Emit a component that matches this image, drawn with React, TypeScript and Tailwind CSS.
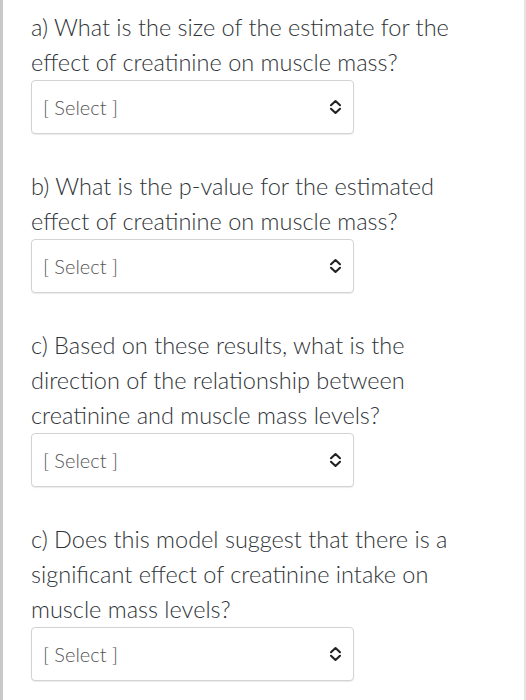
import React from "react";

interface QuestionProps {
  text: string;
}

const SelectBox = () => {
  return (
    <div className="flex h-[54px] w-[323px] items-center justify-between rounded-[4px] border border-[#d3d3d3] bg-white pl-[11px] pr-[11px] shadow-[0_1px_1px_rgba(0,0,0,0.08)]">
      <span className="text-[20px] font-light text-[#555]">[ Select ]</span>
      <svg width="13" height="16" viewBox="0 0 13 16" fill="none">
        <path
          d="M2 6.2 L6.5 2 L11 6.2"
          stroke="#222"
          strokeWidth="2.1"
          strokeLinecap="round"
          strokeLinejoin="round"
        />
        <path
          d="M2 9.8 L6.5 14 L11 9.8"
          stroke="#222"
          strokeWidth="2.1"
          strokeLinecap="round"
          strokeLinejoin="round"
        />
      </svg>
    </div>
  );
};

const Question: React.FC<QuestionProps> = ({ text }) => {
  return (
    <div className="mb-[35px] flex flex-col">
      <p className="w-[445px] text-[23.5px] font-light leading-[35px] text-[#2f3438]">
        {text}
      </p>
      <SelectBox />
    </div>
  );
};

const questions = [
  "a) What is the size of the estimate for the effect of creatinine on muscle mass?",
  "b) What is the p-value for the estimated effect of creatinine on muscle mass?",
  "c) Based on these results, what is the direction of the relationship between creatinine and muscle mass levels?",
  "c) Does this model suggest that there is a significant effect of creatinine intake on muscle mass levels?",
];

export default function App() {
  return (
    <div
      className="h-[700px] w-[526px] overflow-hidden border-l-[3px] border-r-2 border-l-[#c8c8c8] border-r-[#e4e4e4] bg-white pl-[28px] pt-[10px]"
      style={{ fontFamily: "Lato, 'Liberation Sans', sans-serif" }}
    >
      {questions.map((q) => (
        <Question key={q} text={q} />
      ))}
    </div>
  );
}
